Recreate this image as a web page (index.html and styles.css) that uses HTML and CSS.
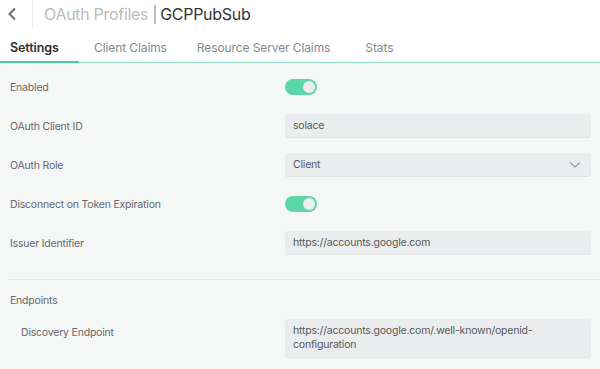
FILE: index.html
```html
<!DOCTYPE html>
<html>
<head>
<meta charset="utf-8">
<link rel="stylesheet" href="styles.css">
</head>
<body>
<div class="page">
  <header class="topbar">
    <div class="back">
      <svg width="10" height="14" viewBox="0 0 10 14"><path d="M8 1.5 L2.5 7 L8 12.5" fill="none" stroke="#6b6f72" stroke-width="2"/></svg>
    </div>
    <div class="title"><span class="crumb">OAuth Profiles</span><span class="sep">|</span><span class="name">GCPPubSub</span></div>
  </header>
  <nav class="tabs">
    <div class="tab active">Settings</div>
    <div class="tab">Client Claims</div>
    <div class="tab">Resource Server Claims</div>
    <div class="tab">Stats</div>
  </nav>
  <main class="content">
    <div class="row">
      <div class="label">Enabled</div>
      <div class="field"><span class="toggle"><span class="knob"></span></span></div>
    </div>
    <div class="row">
      <div class="label">OAuth Client ID</div>
      <div class="field"><div class="input">solace</div></div>
    </div>
    <div class="row">
      <div class="label">OAuth Role</div>
      <div class="field"><div class="input select">Client
        <svg class="chev" width="12" height="8" viewBox="0 0 12 8"><path d="M1 1.5 L6 6 L11 1.5" fill="none" stroke="#9a9ea1" stroke-width="1.2"/></svg></div></div>
    </div>
    <div class="row">
      <div class="label">Disconnect on Token Expiration</div>
      <div class="field"><span class="toggle"><span class="knob"></span></span></div>
    </div>
    <div class="row">
      <div class="label">Issuer Identifier</div>
      <div class="field"><div class="input">https://accounts.google.com</div></div>
    </div>
    <hr class="divider">
    <div class="section">Endpoints</div>
    <div class="row top">
      <div class="label sub">Discovery Endpoint</div>
      <div class="field"><div class="input multi">https://accounts.google.com/.well-known/openid-configuration</div></div>
    </div>
  </main>
</div>
</body>
</html>
```
FILE: styles.css
```css
html, body {
  margin: 0;
  padding: 0;
  background: #ffffff;
  font-family: "Inter", "Open Sans", sans-serif;
}
.page {
  width: 600px;
  height: 369px;
  overflow: hidden;
  display: flex;
  flex-direction: column;
}
.topbar {
  height: 30px;
  display: flex;
  align-items: stretch;
}
.back {
  width: 33px;
  box-sizing: border-box;
  border-right: 1px solid #ececec;
  display: flex;
  align-items: center;
  padding-left: 7px;
  height: 28px;
}
.title {
  padding-left: 11px;
  display: flex;
  align-items: center;
  font-size: 16px;
  height: 28px;
  letter-spacing: -0.3px;
}
.crumb { color: #b9bcbe; }
.sep { color: #9a9c9e; margin: 0 3px 0 4px; }
.name { color: #333537; }
.tabs {
  height: 33px;
  box-sizing: border-box;
  border-bottom: 1px solid #8fe0c6;
  display: flex;
  align-items: stretch;
}
.tab {
  font-size: 12px;
  letter-spacing: -0.1px;
  color: #85898c;
  padding: 0 15px;
  display: flex;
  align-items: center;
  height: 32px;
  box-sizing: border-box;
  padding-top: 2px;
}
.tab:first-child { padding-left: 10px; }
.tab:last-child { padding-left: 20px; }
.tab.active {
  color: #2f3133;
  font-weight: 600;
  font-size: 12.5px;
  border-bottom: 2px solid #4dcc9e;
  padding-top: 3px;
  width: 79px;
  height: 33px;
  margin-bottom: -1px;
}
.content {
  flex: 1;
  background: #f5f6f6;
  padding: 12px 9px 0 10px;
  display: flex;
  flex-direction: column;
  gap: 15px;
}
.row {
  display: grid;
  grid-template-columns: 275px 1fr;
  align-items: center;
  min-height: 24px;
}
.row.top { align-items: start; }
.label {
  font-size: 10.5px;
  letter-spacing: -0.2px;
  color: #67696b;
}
.label.sub { padding-left: 11px; padding-top: 7px; }
.toggle {
  display: inline-flex;
  width: 32px;
  height: 16px;
  border-radius: 8px;
  background: #5dd6a9;
  align-items: center;
  justify-content: flex-end;
  padding: 0 2px;
  box-sizing: border-box;
}
.knob {
  width: 12px;
  height: 12px;
  border-radius: 50%;
  background: #eceeee;
}
.input {
  background: #ebeced;
  border-radius: 3px;
  height: 24px;
  box-sizing: border-box;
  padding: 0 8px;
  display: flex;
  align-items: center;
  font-size: 10.5px;
  letter-spacing: -0.2px;
  color: #57595b;
  border-bottom: 1px solid #e2e4e5;
}
.select { justify-content: space-between; }
.chev { margin-right: 2px; }
.input.multi {
  height: 39px;
  display: block;
  padding: 5px 8px;
  line-height: 14px;
}
.divider {
  border: none;
  border-top: 1px solid #e4e6e6;
  margin: 9px -9px 0 -2px;
  height: 0;
}
.section {
  font-size: 10.5px;
  letter-spacing: -0.2px;
  color: #67696b;
  margin-top: -1px;
  margin-bottom: -3px;
}
```
